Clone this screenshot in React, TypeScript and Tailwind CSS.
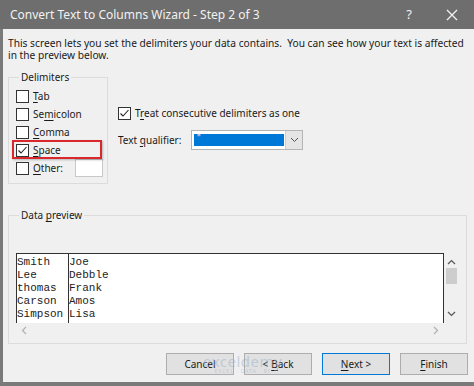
import React from 'react';

const ui = { fontFamily: '"Noto Sans", "Liberation Sans", sans-serif' };
const mono = { fontFamily: '"Liberation Mono", "Courier New", monospace' };

function Box({ checked }: { checked?: boolean }) {
  return (
    <span className="w-[13px] h-[13px] border border-[#333333] bg-white flex items-center justify-center shrink-0">
      {checked && (
        <svg width="11" height="11" viewBox="0 0 11 11">
          <polyline points="1.5,5.5 4,8 9.5,2" fill="none" stroke="#222" strokeWidth="1.1" />
        </svg>
      )}
    </span>
  );
}

function Check({ label, u, checked }: { label: string; u: number; checked?: boolean }) {
  return (
    <div className="h-[18px] flex items-center">
      <Box checked={checked} />
      <span className="ml-[4px]">
        {label.slice(0, u)}
        <span className="underline underline-offset-2">{label[u]}</span>
        {label.slice(u + 1)}
      </span>
    </div>
  );
}

const rows = [
  ['Smith', 'Joe'],
  ['Lee', 'Debble'],
  ['thomas', 'Frank'],
  ['Carson', 'Amos'],
  ['Simpson', 'Lisa'],
];

function Btn({ children, primary }: { children: React.ReactNode; primary?: boolean }) {
  return (
    <div
      className={
        'w-[68px] h-[22px] flex items-center justify-center bg-[#e1e1e1] border ' +
        (primary ? 'border-[#0078d7]' : 'border-[#adadad]')
      }
    >
      {children}
    </div>
  );
}

export default function App() {
  return (
    <div className="w-[474px] h-[386px] flex flex-col bg-[#f0f0f0] text-[10px] text-[#1a1a1a] overflow-hidden" style={ui}>
      {/* Title bar */}
      <div className="h-[29px] bg-[#6e6e6e] flex items-center text-[#f2f2f2] text-[12px] shrink-0">
        <span className="ml-[10px]">Convert Text to Columns Wizard - Step 2 of 3</span>
        <span className="ml-auto mr-[34px] text-[13px]">?</span>
        <svg width="12" height="12" viewBox="0 0 12 12" className="mr-[16px]">
          <path d="M1 1 L11 11 M11 1 L1 11" stroke="#f2f2f2" strokeWidth="1.3" />
        </svg>
      </div>

      <div className="flex-1 flex flex-col border-l-[3px] border-b-[4px] border-[#7a7a7a] pl-[5px] relative">
        <p className="mt-[8px] leading-[12px] whitespace-nowrap text-[10.2px]">
          This screen lets you set the delimiters your data contains.&nbsp; You can see how your text is affected
          <br />
          in the preview below.
        </p>

        <div className="flex mt-[10px]">
          <fieldset className="w-[100px] h-[113px] border border-[#dcdcdc] pl-[7px]">
            <legend className="ml-[3px] px-[2px] leading-[12px]">Delimiters</legend>
            <div className="pt-[4px]">
              <Check label="Tab" u={0} />
              <Check label="Semicolon" u={2} />
              <Check label="Comma" u={0} />
              <div className="relative">
                <Check label="Space" u={0} checked />
                <div className="absolute left-[-4px] top-[-1px] w-[90px] h-[19px] border-2 border-[#d9272e] shadow-[1px_1px_2px_rgba(0,0,0,0.25)]" />
              </div>
              <div className="h-[18px] flex items-center">
                <Box />
                <span className="ml-[4px]">
                  <span className="underline underline-offset-2">O</span>ther:
                </span>
                <span className="ml-[12px] w-[28px] h-[18px] bg-white border border-[#c8c8c8]" />
              </div>
            </div>
          </fieldset>

          <div className="ml-[10px] mt-[33px] flex flex-col">
            <Check label="Treat consecutive delimiters as one" u={1} checked />
            <div className="mt-[8px] flex items-center h-[20px]">
              <span className="w-[73px]">
                Text <span className="underline underline-offset-2">q</span>ualifier:
              </span>
              <div className="w-[112px] h-[20px] bg-white border border-[#b4b4b4] flex">
                <div className="flex-1 my-[3px] ml-[2px] mr-[1px] bg-[#0078d7] text-white text-[9px] leading-[8px] pl-[3px]">"</div>
                <div className="w-[17px] bg-[#e5e5e5] border-l border-[#cfcfcf] flex items-center justify-center">
                  <svg width="9" height="6" viewBox="0 0 9 6">
                    <polyline points="1,1 4.5,4.5 8,1" fill="none" stroke="#555" strokeWidth="1" />
                  </svg>
                </div>
              </div>
            </div>
          </div>
        </div>

        <fieldset className="mt-[25px] w-[459px] h-[135px] border border-[#dcdcdc] pl-[7px]">
          <legend className="ml-[3px] px-[2px] leading-[12px]">
            Data <span className="underline underline-offset-2">p</span>review
          </legend>
          <div className="mt-[32px] w-[442px] flex flex-col">
            <div className="flex h-[70px]">
              <div className="w-[428px] bg-white border-t border-x border-[#333333] flex text-[11px] leading-[13px] text-[#222]" style={mono}>
                <div className="w-[52px] border-r border-[#333333] pt-[2px]">
                  {rows.map((r) => (
                    <div key={r[0]}>{r[0]}</div>
                  ))}
                </div>
                <div className="pt-[2px]">
                  {rows.map((r) => (
                    <div key={r[1]}>{r[1]}</div>
                  ))}
                </div>
              </div>
              <div className="w-[14px] flex flex-col items-center">
                <svg width="9" height="6" viewBox="0 0 9 6" className="mt-[6px]">
                  <polyline points="1,5 4.5,1.5 8,5" fill="none" stroke="#555" strokeWidth="1.2" />
                </svg>
                <div className="mt-[3px] w-[11px] h-[16px] bg-[#cdcdcd]" />
                <svg width="9" height="6" viewBox="0 0 9 6" className="mt-auto mb-[6px]">
                  <polyline points="1,1 4.5,4.5 8,1" fill="none" stroke="#555" strokeWidth="1.2" />
                </svg>
              </div>
            </div>
            <div className="h-[15px] w-[428px] flex items-center justify-between px-[5px]">
              <svg width="6" height="9" viewBox="0 0 6 9">
                <polyline points="5,1 1.5,4.5 5,8" fill="none" stroke="#b0b0b0" strokeWidth="1.2" />
              </svg>
              <svg width="6" height="9" viewBox="0 0 6 9">
                <polyline points="1,1 4.5,4.5 1,8" fill="none" stroke="#b0b0b0" strokeWidth="1.2" />
              </svg>
            </div>
          </div>
        </fieldset>

        <div className="mt-[9px] flex justify-end gap-[10px] pr-[6px]">
          <Btn>Cancel</Btn>
          <Btn>
            &lt; <span className="underline underline-offset-2 ml-[3px]">B</span>ack
          </Btn>
          <Btn primary>
            <span className="underline underline-offset-2">N</span>ext &gt;
          </Btn>
          <Btn>
            <span className="underline underline-offset-2">F</span>inish
          </Btn>
        </div>

        {/* watermark */}
        <div className="absolute left-[200px] top-[325px] flex flex-col items-center opacity-50 pointer-events-none">
          <span className="text-[15px] leading-[14px] text-[#9db2cc] tracking-[0.5px]">exceldemy</span>
          <span className="text-[5px] leading-[6px] text-[#9db2cc] tracking-[1px]">EXCEL · DATA · BI</span>
        </div>
      </div>
    </div>
  );
}
